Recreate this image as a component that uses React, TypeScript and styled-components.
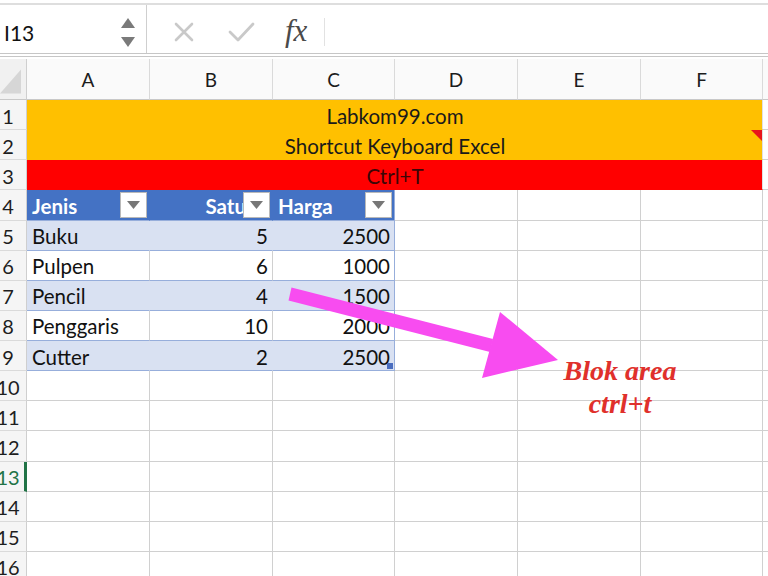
import React from "react";
import styled, { createGlobalStyle } from "styled-components";

const Global = createGlobalStyle`
  html, body { margin: 0; padding: 0; background: #fff; overflow: hidden; }
  body { font-family: Lato, "Liberation Sans", sans-serif; }
  * { box-sizing: border-box; }
`;

const Page = styled.div`
  position: relative;
  width: 768px;
  height: 576px;
  overflow: hidden;
  background: #fff;
  padding-top: 3px;
`;

/* ---------- formula bar ---------- */
const Toolbar = styled.div`
  margin-bottom: 2px;
  border-top: 2px solid #dedede;
  border-bottom: 1px solid #c6c6c6;
  padding-bottom: 2px;
`;

const ToolbarInner = styled.div`
  display: flex;
  height: 49px;
  border-bottom: 1px solid #c6c6c6;
`;

const NameBox = styled.div`
  width: 147px;
  border-right: 1px solid #cfcfcf;
  display: flex;
  align-items: center;
  justify-content: space-between;
  padding: 6px 11px 0 4px;
`;

const NameText = styled.span`
  font-size: 21px;
  color: #111;
`;

const FormulaTools = styled.div`
  display: flex;
  align-items: center;
  padding: 6px 0 0 27px;
`;

const ToolIcon = styled.span<{ $gap: number }>`
  display: flex;
  align-items: center;
  margin-right: ${(p) => p.$gap}px;
`;

const Fx = styled.span`
  font-family: "Liberation Serif", "DejaVu Serif", serif;
  font-style: italic;
  font-size: 31px;
  color: #4a4a4a;
  margin-right: 17px;
  line-height: 1;
  margin-top: -3px;
`;

const Sep = styled.span`
  width: 1px;
  height: 28px;
  background: #e2e2e2;
`;

/* ---------- sheet grid ---------- */
const Sheet = styled.div`
  display: grid;
  grid-template-columns: 27px 123px 123px 122px 123px 123px 122px 1fr;
  grid-template-rows: 41px;
  grid-auto-rows: 30.13px;
`;

const Corner = styled.div`
  background: #f1f1f1;
  border-right: 1px solid #cfcfcf;
  border-bottom: 1px solid #c8c8c8;
  display: flex;
  align-items: flex-end;
  padding: 0 5px 5px 0;
`;

const ColHead = styled.div`
  background: #fafafa;
  border-right: 1px solid #dadada;
  border-bottom: 1px solid #c8c8c8;
  display: flex;
  align-items: center;
  justify-content: center;
  font-size: 19px;
  color: #1c1c1c;
  padding-top: 1px;
`;

const RowHead = styled.div<{ $active?: boolean }>`
  background: #f5f5f5;
  border-right: ${(p) => (p.$active ? "3px solid #217346" : "1px solid #cfcfcf")};
  border-bottom: 1px solid #dadada;
  overflow: hidden;
  display: flex;
  align-items: center;
  padding-top: 2px;
  font-size: 20px;
  color: ${(p) => (p.$active ? "#217346" : "#1e1e1e")};
  & > span {
    flex: none;
    width: 36px;
    margin-left: -10px;
    text-align: center;
  }
`;

const Cell = styled.div<{
  $bg?: string;
  $right?: string;
  $bottom?: string;
  $align?: "left" | "right" | "center";
  $span?: number;
  $bold?: boolean;
  $color?: string;
}>`
  position: relative;
  grid-column: span ${(p) => p.$span ?? 1};
  background: ${(p) => p.$bg ?? "#fff"};
  border-right: 1px solid ${(p) => p.$right ?? "#d0d0d0"};
  border-bottom: 1px solid ${(p) => p.$bottom ?? "#d0d0d0"};
  display: flex;
  align-items: center;
  justify-content: ${(p) =>
    p.$align === "right" ? "flex-end" : p.$align === "center" ? "center" : "flex-start"};
  padding: 2px 4px 0 5px;
  font-size: 20.5px;
  font-weight: ${(p) => (p.$bold ? 700 : 400)};
  color: ${(p) => p.$color ?? "#111"};
  white-space: nowrap;
  overflow: hidden;
`;

const FilterButton = styled.span`
  position: absolute;
  right: 2px;
  top: 2px;
  width: 27px;
  height: 26px;
  background: #fff;
  border: 1px solid #b9b9b9;
  display: flex;
  align-items: center;
  justify-content: center;
`;

const CommentMark = styled.span`
  position: absolute;
  right: 0;
  top: 0;
  width: 0;
  height: 0;
  border-top: 11px solid #e8141c;
  border-left: 11px solid transparent;
`;

const ResizeHandle = styled.span`
  position: absolute;
  right: 1px;
  bottom: 1px;
  width: 6px;
  height: 6px;
  background: #4a6dbf;
`;

const ArrowLayer = styled.svg`
  position: absolute;
  left: 0;
  top: 0;
  pointer-events: none;
`;

const Note = styled.div`
  position: absolute;
  left: 545px;
  top: 354px;
  width: 150px;
  text-align: center;
  font-family: "Liberation Serif", "Times New Roman", serif;
  font-weight: 700;
  font-style: italic;
  font-size: 28px;
  line-height: 33px;
  color: #e0302b;
`;

const YELLOW = "#ffc000";
const RED = "#ff0000";
const BLUE = "#4472c4";
const BAND = "#d9e1f2";
const TBORDER = "#97aedb";

const cols = ["A", "B", "C", "D", "E", "F", ""];

const data: [string, number, number][] = [
  ["Buku", 5, 2500],
  ["Pulpen", 6, 1000],
  ["Pencil", 4, 1500],
  ["Penggaris", 10, 2000],
  ["Cutter", 2, 2500],
];

const Tri = () => (
  <svg width="13" height="8" viewBox="0 0 13 8">
    <polygon points="0,0 13,0 6.5,8" fill="#777" />
  </svg>
);

const Blanks = ({ n }: { n: number }) => (
  <>
    {Array.from({ length: n }).map((_, i) => (
      <Cell key={i} />
    ))}
  </>
);

export default function App() {
  const rows: React.ReactNode[] = [];

  rows.push(
    <React.Fragment key="r1">
      <RowHead><span>1</span></RowHead>
      <Cell $span={6} $bg={YELLOW} $right="#e0e0e0" $bottom={YELLOW} $align="center" $color="#1a1a1a">
        Labkom99.com
      </Cell>
      <Cell />
    </React.Fragment>
  );
  rows.push(
    <React.Fragment key="r2">
      <RowHead><span>2</span></RowHead>
      <Cell $span={6} $bg={YELLOW} $right="#e0e0e0" $bottom={YELLOW} $align="center" $color="#1a1a1a">
        Shortcut Keyboard Excel
        <CommentMark />
      </Cell>
      <Cell />
    </React.Fragment>
  );
  rows.push(
    <React.Fragment key="r3">
      <RowHead><span>3</span></RowHead>
      <Cell $span={6} $bg={RED} $right="#e0e0e0" $bottom={RED} $align="center" $color="#3b0606">
        Ctrl+T
      </Cell>
      <Cell />
    </React.Fragment>
  );
  rows.push(
    <React.Fragment key="r4">
      <RowHead><span>4</span></RowHead>
      <Cell $bg={BLUE} $right={BLUE} $bottom={TBORDER} $bold $color="#fff">
        Jenis
        <FilterButton><Tri /></FilterButton>
      </Cell>
      <Cell $bg={BLUE} $right={BLUE} $bottom={TBORDER} $bold $color="#fff" $align="right">
        Satuan
        <FilterButton><Tri /></FilterButton>
      </Cell>
      <Cell $bg={BLUE} $right={TBORDER} $bottom={TBORDER} $bold $color="#fff">
        Harga
        <FilterButton><Tri /></FilterButton>
      </Cell>
      <Blanks n={4} />
    </React.Fragment>
  );
  data.forEach(([name, qty, price], i) => {
    const banded = i % 2 === 0;
    const bg = banded ? BAND : "#fff";
    const inner = banded ? BAND : "#d0d0d0";
    rows.push(
      <React.Fragment key={`d${i}`}>
        <RowHead><span>{i + 5}</span></RowHead>
        <Cell $bg={bg} $right={inner} $bottom={TBORDER}>{name}</Cell>
        <Cell $bg={bg} $right={inner} $bottom={TBORDER} $align="right">{qty}</Cell>
        <Cell $bg={bg} $right={TBORDER} $bottom={TBORDER} $align="right">
          {price}
          {i === data.length - 1 && <ResizeHandle />}
        </Cell>
        <Blanks n={4} />
      </React.Fragment>
    );
  });
  for (let r = 10; r <= 16; r++) {
    rows.push(
      <React.Fragment key={`e${r}`}>
        <RowHead $active={r === 13}><span>{r}</span></RowHead>
        <Blanks n={7} />
      </React.Fragment>
    );
  }

  return (
    <Page>
      <Global />
      <Toolbar>
        <ToolbarInner>
          <NameBox>
            <NameText>I13</NameText>
            <svg width="14" height="31" viewBox="0 0 14 31">
              <polygon points="7,1 14,11 0,11" fill="#7a7a7a" />
              <polygon points="0,20 14,20 7,30" fill="#7a7a7a" />
            </svg>
          </NameBox>
          <FormulaTools>
            <ToolIcon $gap={34}>
              <svg width="20" height="20" viewBox="0 0 20 20">
                <path d="M2 2 L18 18 M18 2 L2 18" stroke="#c9c9c9" strokeWidth="2.6" strokeLinecap="round" />
              </svg>
            </ToolIcon>
            <ToolIcon $gap={30}>
              <svg width="27" height="20" viewBox="0 0 27 20">
                <path d="M2 10 L10 18 L25 2" stroke="#c9c9c9" strokeWidth="2.8" fill="none" strokeLinecap="round" strokeLinejoin="round" />
              </svg>
            </ToolIcon>
            <Fx>fx</Fx>
            <Sep />
          </FormulaTools>
        </ToolbarInner>
      </Toolbar>

      <Sheet>
        <Corner>
          <svg width="22" height="25" viewBox="0 0 22 25">
            <polygon points="0,25 22,0 22,25" fill="#d6d6d6" />
          </svg>
        </Corner>
        {cols.map((c, i) => (
          <ColHead key={i}>{c}</ColHead>
        ))}
        {rows}
      </Sheet>

      <ArrowLayer width="768" height="576" viewBox="0 0 768 576">
        <polygon points="291.5,287.5 288.5,300.5 490,352 493,339" fill="#f84cf0" />
        <polygon points="500,312 558,360 482,378" fill="#f84cf0" />
      </ArrowLayer>

      <Note>
        Blok area
        <br />
        ctrl+t
      </Note>
    </Page>
  );
}
